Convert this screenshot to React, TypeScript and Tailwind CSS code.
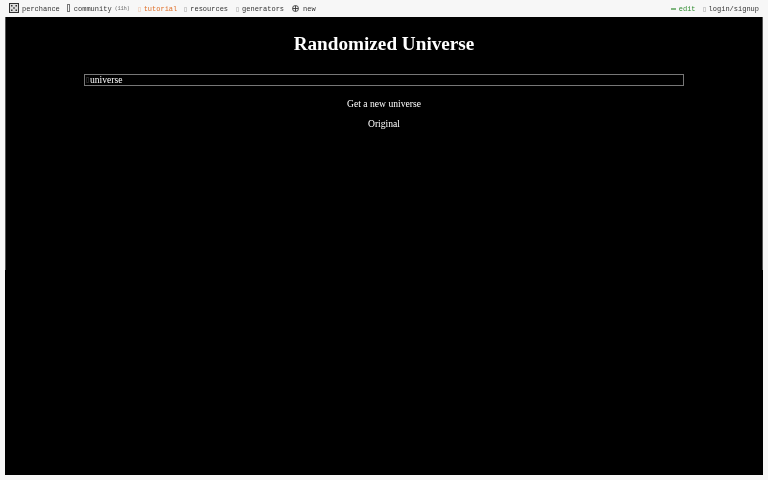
function Tofu({ className = "" }: { className?: string }) {
  return <span className={`inline-block w-[3px] h-[5px] border border-current opacity-20 ${className}`} />;
}

function NavItem({ children, className = "" }: { children: React.ReactNode; className?: string }) {
  return <span className={`flex items-center gap-[3px] whitespace-nowrap ${className}`}>{children}</span>;
}

export default function App() {
  return (
    <div className="h-[480px] w-[768px] flex flex-col overflow-hidden bg-[#f7f7f7] will-change-transform">
      <nav className="h-[17px] pt-[1px] flex items-center justify-between px-[9px] text-[7px] text-[#333] font-['Liberation_Mono',monospace]">
        <div className="flex items-center gap-[7px]">
          <NavItem>
            <svg width="10" height="10" viewBox="0 0 10 10" className="text-[#333] -mt-[3px]">
              <rect x="0.5" y="0.5" width="9" height="9" fill="#ddd" stroke="currentColor" />
              <rect x="2" y="2" width="1.5" height="1.5" fill="currentColor" />
              <rect x="6.5" y="2" width="1.5" height="1.5" fill="currentColor" />
              <rect x="4.25" y="4.25" width="1.5" height="1.5" fill="currentColor" />
              <rect x="2" y="6.5" width="1.5" height="1.5" fill="currentColor" />
              <rect x="6.5" y="6.5" width="1.5" height="1.5" fill="currentColor" />
            </svg>
            <span>perchance</span>
          </NavItem>
          <NavItem className="gap-[4px]">
            <span className="inline-block w-[3px] h-[8px] -mt-[3px] border border-[#777]" />
            <span>community</span>
            <span className="-ml-[1px] mt-[2px] text-[5px] text-[#666]">(11h)</span>
          </NavItem>
          <NavItem className="ml-[1px] text-[#e0702a]">
            <Tofu />
            <span>tutorial</span>
          </NavItem>
          <NavItem>
            <Tofu />
            <span>resources</span>
          </NavItem>
          <NavItem>
            <Tofu className="ml-[1px]" />
            <span>generators</span>
          </NavItem>
          <NavItem className="ml-[1px]">
            <svg width="7" height="7" viewBox="0 0 8 8" fill="none" stroke="#333" strokeWidth="1" className="-mt-[1px]">
              <circle cx="4" cy="4" r="3.4" />
              <path d="M4 1v6M1 4h6" />
            </svg>
            <span className="ml-[1px]">new</span>
          </NavItem>
        </div>
        <div className="flex items-center gap-[7px]">
          <NavItem className="text-[#2e8b2e]">
            <span className="inline-block w-[5px] h-[2px] bg-current opacity-60" />
            <span>edit</span>
          </NavItem>
          <NavItem>
            <Tofu />
            <span>login/signup</span>
          </NavItem>
        </div>
      </nav>
      <main className="mx-[5px] h-[458px] bg-black flex flex-col">
        <div className="h-[253px] border-x border-[#555] flex flex-col items-center font-['Liberation_Serif',serif] text-white">
          <h1 className="mt-[16px] text-[19.2px] leading-[22px] font-bold">Randomized Universe</h1>
          <div className="mt-[19px] w-[600px] h-[12px] border border-[#777] flex items-center gap-[1px] pl-[1px] text-[9.6px] leading-none">
            <span className="inline-block w-[3px] h-[6px] border border-[#222]" />
            universe
          </div>
          <button className="mt-[12px] text-[9.6px] leading-[12px]">Get a new universe</button>
          <a className="mt-[8px] text-[9.6px] leading-[12px]">Original</a>
        </div>
      </main>
    </div>
  );
}
